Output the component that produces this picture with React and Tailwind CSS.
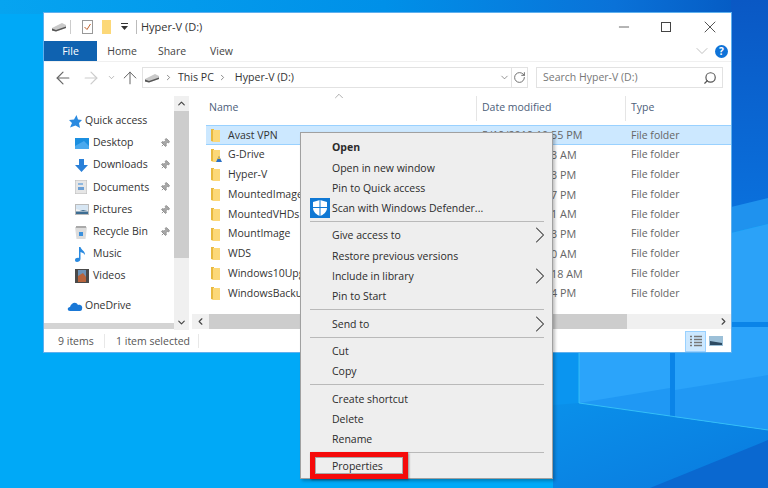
import { ArrowLeft, ArrowRight, ArrowUp, ChevronDown, ChevronLeft, ChevronRight, ChevronUp, RotateCw, Search, Minus, X, Pin } from "lucide-react";

const font = "font-['Open_Sans','Liberation_Sans',sans-serif]";

const Drive = () => (
  <svg width="16" height="10" viewBox="0 0 16 10" className="shrink-0">
    <path d="M1 6 L11 1 L15 3 L15 6 L5 9.5 L1 8.5 Z" fill="#c9c9c9" />
    <path d="M1 6.5 L5 8 L15 4.5 L15 6 L5 9.5 L1 8.5 Z" fill="#555" />
  </svg>
);

const Folder = ({ drive }) => (
  <svg width="14" height="15" viewBox="0 0 14 15" className="shrink-0">
    <path d="M2 1 L5 1 L5 14 L2 13 Z" fill="#e8b93f" />
    <path d="M4 2 L11 2 L11 14 L4 14 Z" fill="#fcd878" />
    {drive && <path d="M7 14 L10 8 L13 14 Z" fill="#2a6fc4" />}
    {drive && <path d="M10 8 L11.5 11 L8.5 11 Z" fill="#e8b93f" />}
  </svg>
);

const navIcons = {
  Desktop: (
    <svg width="14" height="11" viewBox="0 0 14 11">
      <rect width="14" height="11" fill="#1b8fe0" />
      <path d="M0 8 L9 3 L14 8 L14 11 L0 11 Z" fill="#4aa9ee" />
    </svg>
  ),
  Downloads: (
    <svg width="13" height="13" viewBox="0 0 13 13">
      <path d="M4 0 H9 V6 H13 L6.5 13 L0 6 H4 Z" fill="#2a80d8" />
    </svg>
  ),
  Documents: (
    <svg width="12" height="14" viewBox="0 0 12 14">
      <rect width="12" height="14" fill="#e6e6e6" stroke="#bbb" />
      <rect x="3" y="3" width="5" height="2" fill="#8fb8e0" />
      <rect x="3" y="7" width="6" height="3" fill="#6c9fd4" />
    </svg>
  ),
  Pictures: (
    <svg width="14" height="11" viewBox="0 0 14 11">
      <rect width="14" height="11" fill="#bbb" />
      <rect x="1" y="1" width="12" height="5" fill="#d7e6f3" />
      <path d="M1 6 L13 6 L13 10 L1 10 Z" fill="#3d6d92" />
      <path d="M1 5 L8 7 L13 6 L13 7.5 L1 7.5 Z" fill="#f4f4f4" />
    </svg>
  ),
  "Recycle Bin": (
    <svg width="12" height="14" viewBox="0 0 12 14">
      <path d="M0 2 L12 2 L10.5 14 L1.5 14 Z" fill="#dcdcdc" />
      <path d="M1 1 L11 1 L11 3 L1 3 Z" fill="#aaa" />
      <rect x="4" y="7" width="4" height="4" fill="#3b90dc" />
    </svg>
  ),
  Music: (
    <svg width="11" height="15" viewBox="0 0 11 15">
      <path d="M4 0 H5.5 C6 3 10.5 4 10 8 C9 6 7 5.5 5.5 5 V12 C5.5 14 3.5 15 2 15 C0.5 15 0 14 0 13 C0 11.5 2 10.5 4 11 Z" fill="#2a8ae0" />
    </svg>
  ),
  Videos: (
    <svg width="14" height="14" viewBox="0 0 14 14">
      <rect width="14" height="14" fill="#4a4a4a" />
      <rect x="3" y="1" width="8" height="12" fill="#6d93b8" />
      <path d="M3 7 L8 4 L11 8 L11 13 L3 13 Z" fill="#b8643c" />
    </svg>
  ),
};

const Sidebar = () => (
  <div className="w-[130px] shrink-0 flex flex-col pl-[25px] pt-[14px] text-[10.5px] text-[#333] relative">
    <div className="flex items-center h-[22px] gap-[3px]">
      <svg width="13" height="13" viewBox="0 0 13 13">
        <path d="M7.5 0 L9 4.5 L13 5 L10 8 L11 13 L6.5 10.5 L1 12.5 L3 8 L0 5 L5 4.5 Z" fill="#2a8ae0" />
      </svg>
      <span>Quick access</span>
    </div>
    {["Desktop", "Downloads", "Documents", "Pictures", "Recycle Bin", "Music", "Videos"].map((name, i) => (
      <div key={name} className="flex items-center h-[22.2px]">
        <div className="w-[24px] pl-[6px] flex items-center">{navIcons[name]}</div>
        <span className="flex-1">{name}</span>
        {i < 5 && <Pin size={10} className="text-[#888] rotate-45 mr-[4px]" fill="#aaa" />}
      </div>
    ))}
    <div className="flex items-center h-[22px] gap-[2px] mt-[8px] -ml-[2px]">
      <svg width="16" height="10" viewBox="0 0 16 10">
        <path d="M3 10 C0 10 0 6 3 6 C4 2 9 0 11 4 C14 3 16 6 15 8 C15 9 14 10 13 10 Z" fill="#1a78d6" />
      </svg>
      <span>OneDrive</span>
    </div>
    <div className="absolute left-0 bottom-[1px] w-full h-[6px] bg-[#d4d4d4]" />
  </div>
);

const files = [
  ["Avast VPN", "5/19/2019 10:55 PM"],
  ["G-Drive", "5/19/2019 9:13 AM"],
  ["Hyper-V", "5/19/2019 4:23 PM"],
  ["MountedImages", "5/19/2019 3:17 PM"],
  ["MountedVHDs", "5/19/2019 9:11 AM"],
  ["MountImage", "5/19/2019 5:53 PM"],
  ["WDS", "5/19/2019 9:10 AM"],
  ["Windows10Upgrade", "5/19/2019 11:18 AM"],
  ["WindowsBackup", "5/19/2019 2:14 PM"],
];

const FileList = () => (
  <div className="flex-1 min-w-0 flex flex-col text-[10.5px]">
    <div className="h-[25px] ml-[14px] flex text-[#4c607a] relative shrink-0">
      <div className="w-[270px] pl-[3px] pb-[1px] flex items-center">Name</div>
      <ChevronUp size={14} strokeWidth={0.8} className="absolute left-[126px] -top-[7px] text-[#555]" />
      <div className="w-[149px] border-l border-[#e5e5e5] pl-[5px] pb-[1px] flex items-center">Date modified</div>
      <div className="flex-1 border-l border-[#e5e5e5] pl-[5px] pb-[1px] flex items-center">Type</div>
    </div>
    <div className="flex-1 pt-[4px] ml-[14px]">
      {files.map(([name, date], i) => (
        <div
          key={name}
          className={`h-[19.75px] flex items-center pt-[1px] ${i === 0 ? "bg-[#cce8ff] border-y border-[#99d1ff]" : ""}`}
        >
          <div className="w-[270px] pl-[3px] flex items-center gap-[5px] text-[#333]">
            <Folder drive={name === "G-Drive"} />
            <span>{name}</span>
          </div>
          <div className="w-[149px] pl-[6px] text-[#666] text-[10.8px] whitespace-nowrap">{date}</div>
          <div className="flex-1 pl-[6px] text-[#666]">File folder</div>
        </div>
      ))}
    </div>
    <div className="h-[15px] flex items-center bg-[#f0f0f0] mb-[1px] shrink-0">
      <div className="w-[17px] flex justify-center"><ChevronLeft size={11} strokeWidth={2.5} className="text-[#444]" /></div>
      <div className="w-[418px] h-full bg-[#cdcdcd]" />
      <div className="flex-1" />
      <div className="w-[16px] flex justify-center"><ChevronRight size={11} strokeWidth={2.5} className="text-[#444]" /></div>
    </div>
  </div>
);

const Window = () => (
  <div className="w-[687px] h-[339px] bg-white flex flex-col shadow-[0_0_0_1px_#5fb0ee]">
    <div className="h-[28px] flex items-center pl-[7px] text-[11px] text-[#333] shrink-0">
      <Drive />
      <div className="w-px h-[14px] bg-[#ccc] ml-[3px] mr-[11px]" />
      <svg width="11" height="14" viewBox="0 0 11 14" className="mr-[9px]">
        <rect x=".5" y=".5" width="10" height="13" fill="#fff" stroke="#999" />
        <path d="M2.5 7 L5 9.5 L8.5 4" fill="none" stroke="#c0602a" strokeWidth="1" />
      </svg>
      <svg width="9" height="14" viewBox="0 0 9 14" className="mr-[10px]">
        <path d="M0 0 H9 V14 H0 Z" fill="#fcd878" />
      </svg>
      <svg width="7" height="8" viewBox="0 0 7 8" className="mr-[8px]">
        <rect y="0" width="7" height="1" fill="#333" />
        <path d="M0 3 H7 L3.5 7 Z" fill="#333" />
      </svg>
      <div className="w-px h-[14px] bg-[#bbb] mr-[4px]" />
      <span>Hyper-V (D:)</span>
      <div className="ml-auto flex items-center text-[#444] pr-[11px]">
        <Minus size={16} strokeWidth={1.2} />
        <div className="w-[10px] h-[10px] border border-[#444] ml-[29px] mr-[29px]" />
        <X size={20} strokeWidth={1.1} />
      </div>
    </div>
    <div className="h-[21px] flex items-stretch text-[10.5px] text-[#444] shrink-0 border-b border-[#f0f0f0]">
      <div className="w-[53px] bg-[#0f62b0] text-white flex items-center justify-center pt-[1px]">File</div>
      <div className="w-[50px] text-center leading-[21px]">Home</div>
      <div className="w-[50px] text-center leading-[21px]">Share</div>
      <div className="w-[49px] text-center leading-[21px]">View</div>
      <div className="ml-auto flex items-center pr-[3px] gap-[3px]">
        <ChevronDown size={20} strokeWidth={0.9} className="text-[#aaa]" />
        <div className="w-[13px] h-[13px] rounded-full bg-[#0f73d8] text-white text-[10px] font-bold flex items-center justify-center">?</div>
      </div>
    </div>
    <div className="h-[34px] flex items-center shrink-0 pl-[8.5px] pr-[8px] pb-[3px] text-[10.6px] text-[#333]">
      <ArrowLeft size={20} strokeWidth={1.4} className="text-[#666] mr-[8.5px]" />
      <ArrowRight size={20} strokeWidth={1.4} className="text-[#ccc] mr-[6px]" />
      <ChevronDown size={9} strokeWidth={1.5} className="text-[#888] mr-[4px]" />
      <ArrowUp size={20} strokeWidth={1.1} className="text-[#555] mr-[2px]" />
      <div className="w-[386px] h-[21px] border border-[#e2e2e2] flex items-center pl-[1px]">
        <Drive />
        <ChevronRight size={9} strokeWidth={2} className="text-[#666] ml-[3.5px] mr-[5.5px]" />
        <span className="pt-[1px]">This PC</span>
        <ChevronRight size={9} strokeWidth={2} className="text-[#666] ml-[4.5px] mr-[7.5px]" />
        <span className="pt-[1px]">Hyper-V (D:)</span>
        <div className="ml-auto h-full flex items-center">
          <ChevronDown size={11} strokeWidth={1.5} className="text-[#666] mr-[1.5px]" />
          <div className="w-[16px] h-full border-l border-[#e2e2e2] flex items-center justify-center">
            <RotateCw size={13} strokeWidth={1.7} className="text-[#666]" />
          </div>
        </div>
      </div>
      <div className="ml-[8px] flex-1 h-[21px] border border-[#e2e2e2] flex items-center pl-[6px] pr-[5px] text-[#777] text-[10.5px]">
        <span className="pt-[1px]">Search Hyper-V (D:)</span>
        <Search size={14} strokeWidth={2} className="ml-auto text-[#555] -scale-x-100" />
      </div>
    </div>
    <div className="h-[234px] flex shrink-0">
      <Sidebar />
      <div className="w-[15px] shrink-0 bg-[#f0f0f0] flex flex-col mr-[3px]">
        <div className="h-[15px] flex items-center justify-center"><ChevronUp size={11} strokeWidth={2.5} className="text-[#444]" /></div>
        <div className="h-[147px] bg-[#cdcdcd]" />
        <div className="flex-1" />
        <div className="h-[15px] flex items-center justify-center"><ChevronDown size={11} strokeWidth={2.5} className="text-[#444]" /></div>
      </div>
      <FileList />
    </div>
    <div className="h-[22px] shrink-0 flex items-center pl-[14px] text-[10.5px] text-[#555]">
      <span className="w-[46px] pt-[1px]">9 items</span>
      <div className="w-px h-[14px] bg-[#e8e8e8] mr-[11px]" />
      <span className="w-[82px] pt-[1px]">1 item selected</span>
      <div className="w-px h-[14px] bg-[#e8e8e8]" />
      <div className="ml-auto flex items-center pr-[8px] gap-[3px]">
        <div className="w-[21px] h-[21px] bg-[#cce8ff] border border-[#99d1ff] flex items-center justify-center">
          <svg width="14" height="13" viewBox="0 0 14 13">
            <path d="M1 1.5 H3 M5 1.5 H13 M1 4.5 H3 M5 4.5 H13 M1 7.5 H3 M5 7.5 H13 M1 10.5 H3 M5 10.5 H13" stroke="#777" strokeWidth="1.5" />
          </svg>
        </div>
        <svg width="14" height="10" viewBox="0 0 14 10">
          <rect width="14" height="10" fill="#9cc0d8" />
          <path d="M1 5 L13 7 L13 9 L1 9 Z" fill="#2c4a62" />
        </svg>
      </div>
    </div>
  </div>
);

const menu = [
  [{ t: "Open", bold: true }, { t: "Open in new window" }, { t: "Pin to Quick access" }, { t: "Scan with Windows Defender...", shield: true }],
  [{ t: "Give access to", arrow: true }, { t: "Restore previous versions" }, { t: "Include in library", arrow: true }, { t: "Pin to Start" }],
  [{ t: "Send to", arrow: true }],
  [{ t: "Cut" }, { t: "Copy" }],
  [{ t: "Create shortcut" }, { t: "Delete" }, { t: "Rename" }],
  [{ t: "Properties" }],
];

const ContextMenu = () => (
  <div className="absolute left-[300px] top-[132px] w-[253px] h-[347px] bg-[#eeeeee] border border-[#a0a0a0] pt-[4px] text-[10.5px] text-[#2b2b2b] shadow-[2px_2px_3px_rgba(0,0,0,0.25)]">
    {menu.map((group, i) => (
      <div key={i}>
        {i > 0 && <div className="h-px bg-[#b9b9b9] ml-[9px] mr-[8px] my-[3px]" />}
        {group.map((it) => (
          <div key={it.t} className={`h-[20.3px] flex items-center pl-[31px] pr-[8px] relative ${it.bold ? "font-bold" : ""}`}>
            {it.shield && (
              <div className="absolute left-[9px] top-0 w-[20px] h-[20px] bg-[#0f78d4] flex items-center justify-center">
                <svg width="14" height="16" viewBox="0 0 14 16">
                  <path d="M7 0 L14 2 V8 C14 12 10 15 7 16 C4 15 0 12 0 8 V2 Z" fill="#fff" />
                  <path d="M6.5 0 H7.5 V16 H6.5 Z M0 7 H14 V8 H0 Z" fill="#0f78d4" />
                </svg>
              </div>
            )}
            <span className="pt-[2px]">{it.t}</span>
            {it.arrow && <ChevronRight size={28} strokeWidth={0.9} className="ml-auto -mr-[10px] text-[#333]" />}
          </div>
        ))}
      </div>
    ))}
    <div className="absolute left-[9px] top-[319px] w-[98px] h-[27px] border-[5px] border-[#f50a0a] shadow-[1px_1px_2px_rgba(0,0,0,0.4),inset_0_0_0_1px_#a8a8a8]" />
  </div>
);

const Wallpaper = () => (
  <svg className="absolute inset-0" width="768" height="488" viewBox="0 0 768 488">
    <defs>
      <linearGradient id="top" x1="0" y1="0" x2="1" y2="0">
        <stop offset="0" stopColor="#06a4f0" />
        <stop offset="0.5" stopColor="#0090e8" />
        <stop offset="0.8" stopColor="#0a72d8" />
        <stop offset="1" stopColor="#0456bf" />
      </linearGradient>
      <linearGradient id="right" x1="0" y1="0" x2="0" y2="1">
        <stop offset="0" stopColor="#0a58c4" />
        <stop offset="1" stopColor="#0a70dc" />
      </linearGradient>
      <linearGradient id="floor" x1="0" y1="0" x2="1" y2="1">
        <stop offset="0" stopColor="#0a90ea" />
        <stop offset="1" stopColor="#0a7ade" />
      </linearGradient>
    </defs>
    <rect width="768" height="488" fill="#00a9f7" />
    <rect width="768" height="14" fill="url(#top)" />
    <rect x="731" y="0" width="37" height="210" fill="url(#right)" />
    <path d="M731 207 L768 198 V224 L731 233 Z" fill="#1f92ee" />
    <path d="M731 233 L768 224 V322 H731 Z" fill="#2ba2f8" />
    <rect x="731" y="322" width="37" height="5" fill="#0a84e8" />
    <rect x="731" y="327" width="37" height="30" fill="#2ba3fa" />
    <rect x="553" y="350" width="26" height="56" fill="#0a95f0" />
    <path d="M553 405 L579 403 L768 430 V488 H553 Z" fill="url(#floor)" />
    <path d="M579 350 H670 V416 L579 403 Z" fill="#2ba4fa" />
    <path d="M579 403 L670 388 V416 Z" fill="#1f98f4" />
    <rect x="670" y="350" width="5" height="67" fill="#0a84e8" />
    <path d="M675 350 H768 V430 L675 417 Z" fill="#2aa3fa" />
    <path d="M675 390 L768 375 V430 L675 417 Z" fill="#2098f4" />
    <path d="M579 350 V403 L670 416 L768 430" fill="none" stroke="#3fcdf8" strokeWidth="1" opacity="0.7" />
    <path d="M650 488 L768 440 V488 Z" fill="#0a68d0" />
  </svg>
);

export default function App() {
  return (
    <div className={`relative w-[768px] h-[488px] overflow-hidden ${font}`}>
      <Wallpaper />
      <div className="relative pt-[13px] pl-[44px]">
        <Window />
      </div>
      <ContextMenu />
    </div>
  );
}
